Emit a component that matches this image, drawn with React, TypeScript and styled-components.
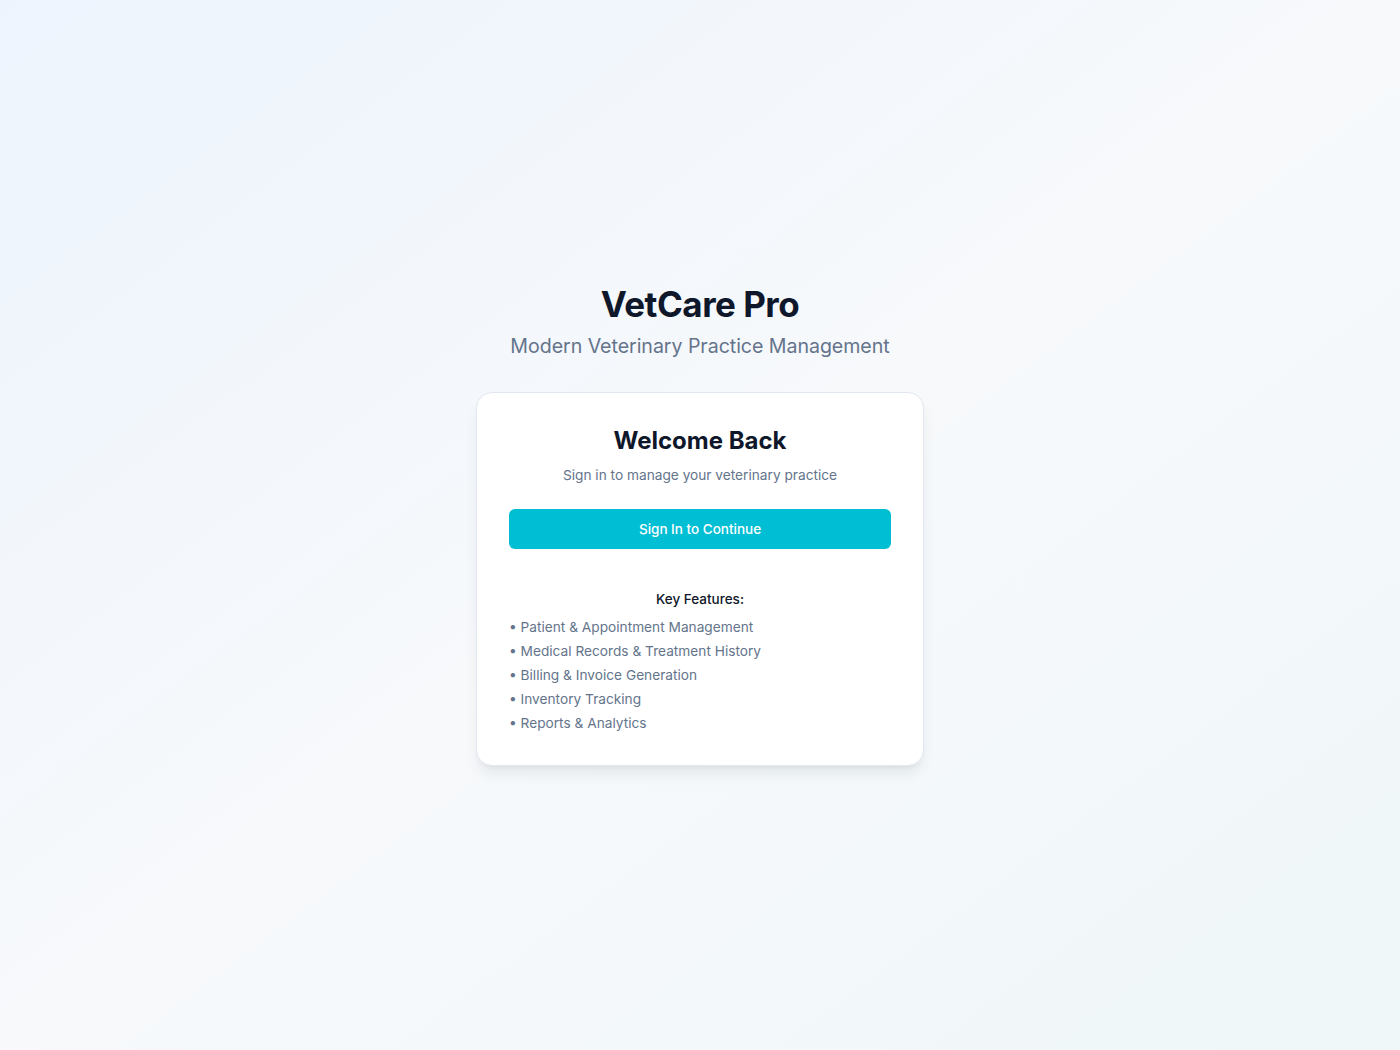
import React from 'react';
import styled, { createGlobalStyle } from 'styled-components';

const GlobalStyle = createGlobalStyle`
  * {
    box-sizing: border-box;
  }
  body {
    margin: 0;
    font-family: Inter, "Noto Sans", "DejaVu Sans", sans-serif;
    -webkit-font-smoothing: antialiased;
  }
`;

const Page = styled.div`
  min-height: 1050px;
  display: flex;
  align-items: center;
  justify-content: center;
  background: linear-gradient(
    to bottom right,
    #edf4fd 0%,
    #f7f9fb 50%,
    #eff7f9 100%
  );
`;

const Column = styled.div`
  width: 448px;
  display: flex;
  flex-direction: column;
  align-items: center;
`;

const Brand = styled.h1`
  margin: 0;
  font-size: 35px;
  line-height: 40px;
  font-weight: 700;
  letter-spacing: -0.5px;
  color: #0f172a;
`;

const Tagline = styled.p`
  margin: 8px 0 0;
  font-size: 19.6px;
  line-height: 28px;
  color: #64748b;
  letter-spacing: -0.05px;
`;

const Card = styled.div`
  width: 448px;
  margin-top: 32px;
  padding: 32px;
  background: #ffffff;
  border: 1px solid #e2e8f0;
  border-radius: 16px;
  box-shadow: 0 10px 15px -3px rgba(15, 23, 42, 0.08),
    0 4px 6px -4px rgba(15, 23, 42, 0.08);
  display: flex;
  flex-direction: column;
`;

const CardTitle = styled.h2`
  margin: 0;
  text-align: center;
  font-size: 24px;
  line-height: 32px;
  font-weight: 700;
  letter-spacing: 0;
  color: #0f172a;
`;

const CardSubtitle = styled.p`
  margin: 8px 0 0;
  text-align: center;
  font-size: 13.7px;
  line-height: 20px;
  color: #64748b;
`;

const PrimaryButton = styled.button`
  margin-top: 24px;
  height: 40px;
  width: 100%;
  border: none;
  border-radius: 6px;
  background: #00bed4;
  color: #ffffff;
  font-family: inherit;
  font-size: 13.5px;
  font-weight: 500;
  cursor: pointer;
`;

const FeaturesHeading = styled.h3`
  margin: 40px 0 0;
  text-align: center;
  font-size: 13.5px;
  line-height: 20px;
  font-weight: 500;
  color: #0f172a;
`;

const FeatureList = styled.ul`
  list-style: none;
  margin: 8px 0 0;
  padding: 0;
  display: flex;
  flex-direction: column;
  gap: 4px;
`;

const FeatureItem = styled.li`
  font-size: 13.7px;
  line-height: 20px;
  color: #64748b;
`;

const features = [
  'Patient & Appointment Management',
  'Medical Records & Treatment History',
  'Billing & Invoice Generation',
  'Inventory Tracking',
  'Reports & Analytics'
];

export default function App() {
  return (
    <>
      <GlobalStyle />
      <Page>
        <Column>
          <Brand>VetCare Pro</Brand>
          <Tagline>Modern Veterinary Practice Management</Tagline>
          <Card>
            <CardTitle>Welcome Back</CardTitle>
            <CardSubtitle>Sign in to manage your veterinary practice</CardSubtitle>
            <PrimaryButton>Sign In to Continue</PrimaryButton>
            <FeaturesHeading>Key Features:</FeaturesHeading>
            <FeatureList>
              {features.map((f) => (
                <FeatureItem key={f}>• {f}</FeatureItem>
              ))}
            </FeatureList>
          </Card>
        </Column>
      </Page>
    </>
  );
}
